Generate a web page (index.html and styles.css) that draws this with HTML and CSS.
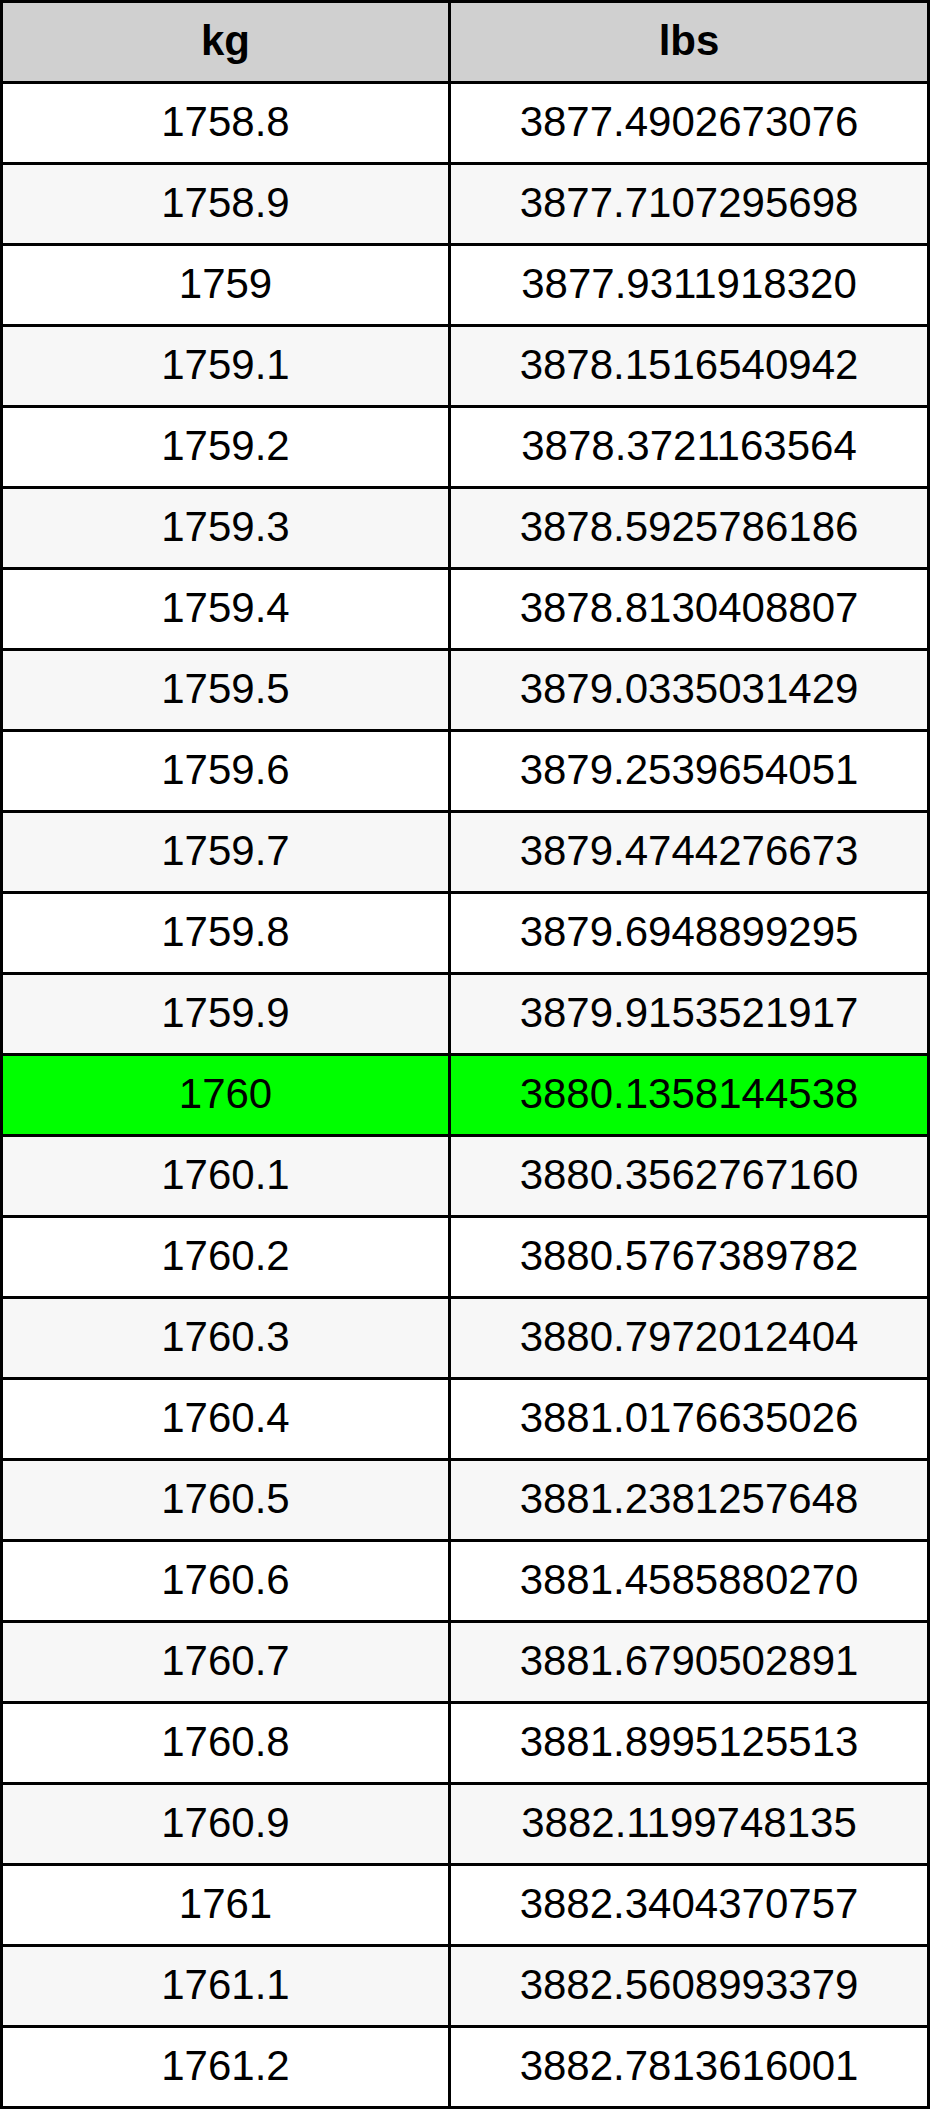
FILE: index.html
```html
<!DOCTYPE html>
<html>
<head>
<meta charset="utf-8">
<link rel="stylesheet" href="styles.css">
</head>
<body>
<table class="conv">
<thead>
<tr><th class="c1">kg</th><th class="c2">lbs</th></tr>
</thead>
<tbody>
<tr><td>1758.8</td><td>3877.4902673076</td></tr>
<tr><td>1758.9</td><td>3877.7107295698</td></tr>
<tr><td>1759</td><td>3877.9311918320</td></tr>
<tr><td>1759.1</td><td>3878.1516540942</td></tr>
<tr><td>1759.2</td><td>3878.3721163564</td></tr>
<tr><td>1759.3</td><td>3878.5925786186</td></tr>
<tr><td>1759.4</td><td>3878.8130408807</td></tr>
<tr><td>1759.5</td><td>3879.0335031429</td></tr>
<tr><td>1759.6</td><td>3879.2539654051</td></tr>
<tr><td>1759.7</td><td>3879.4744276673</td></tr>
<tr><td>1759.8</td><td>3879.6948899295</td></tr>
<tr><td>1759.9</td><td>3879.9153521917</td></tr>
<tr class="hl"><td>1760</td><td>3880.1358144538</td></tr>
<tr><td>1760.1</td><td>3880.3562767160</td></tr>
<tr><td>1760.2</td><td>3880.5767389782</td></tr>
<tr><td>1760.3</td><td>3880.7972012404</td></tr>
<tr><td>1760.4</td><td>3881.0176635026</td></tr>
<tr><td>1760.5</td><td>3881.2381257648</td></tr>
<tr><td>1760.6</td><td>3881.4585880270</td></tr>
<tr><td>1760.7</td><td>3881.6790502891</td></tr>
<tr><td>1760.8</td><td>3881.8995125513</td></tr>
<tr><td>1760.9</td><td>3882.1199748135</td></tr>
<tr><td>1761</td><td>3882.3404370757</td></tr>
<tr><td>1761.1</td><td>3882.5608993379</td></tr>
<tr><td>1761.2</td><td>3882.7813616001</td></tr>
</tbody>
</table>
</body>
</html>
```
FILE: styles.css
```css
html, body {
  margin: 0;
  padding: 0;
  background: #ffffff;
}
.conv {
  border-collapse: collapse;
  width: 930px;
  table-layout: fixed;
  font-family: "Liberation Sans", Arial, sans-serif;
  font-size: 42px;
  color: #000;
}
.conv th, .conv td {
  border: 3px solid #000;
  height: 81px;
  padding: 0 0 3px 0;
  text-align: center;
  vertical-align: middle;
  box-sizing: border-box;
}
.conv th {
  background: #d0d0d0;
  font-weight: bold;
}
.conv .c1 { width: 448px; }
.conv tbody tr { background: #ffffff; }
.conv tbody tr:nth-child(even) { background: #f7f7f7; }
.conv tbody tr.hl { background: #00ff00; }
```
